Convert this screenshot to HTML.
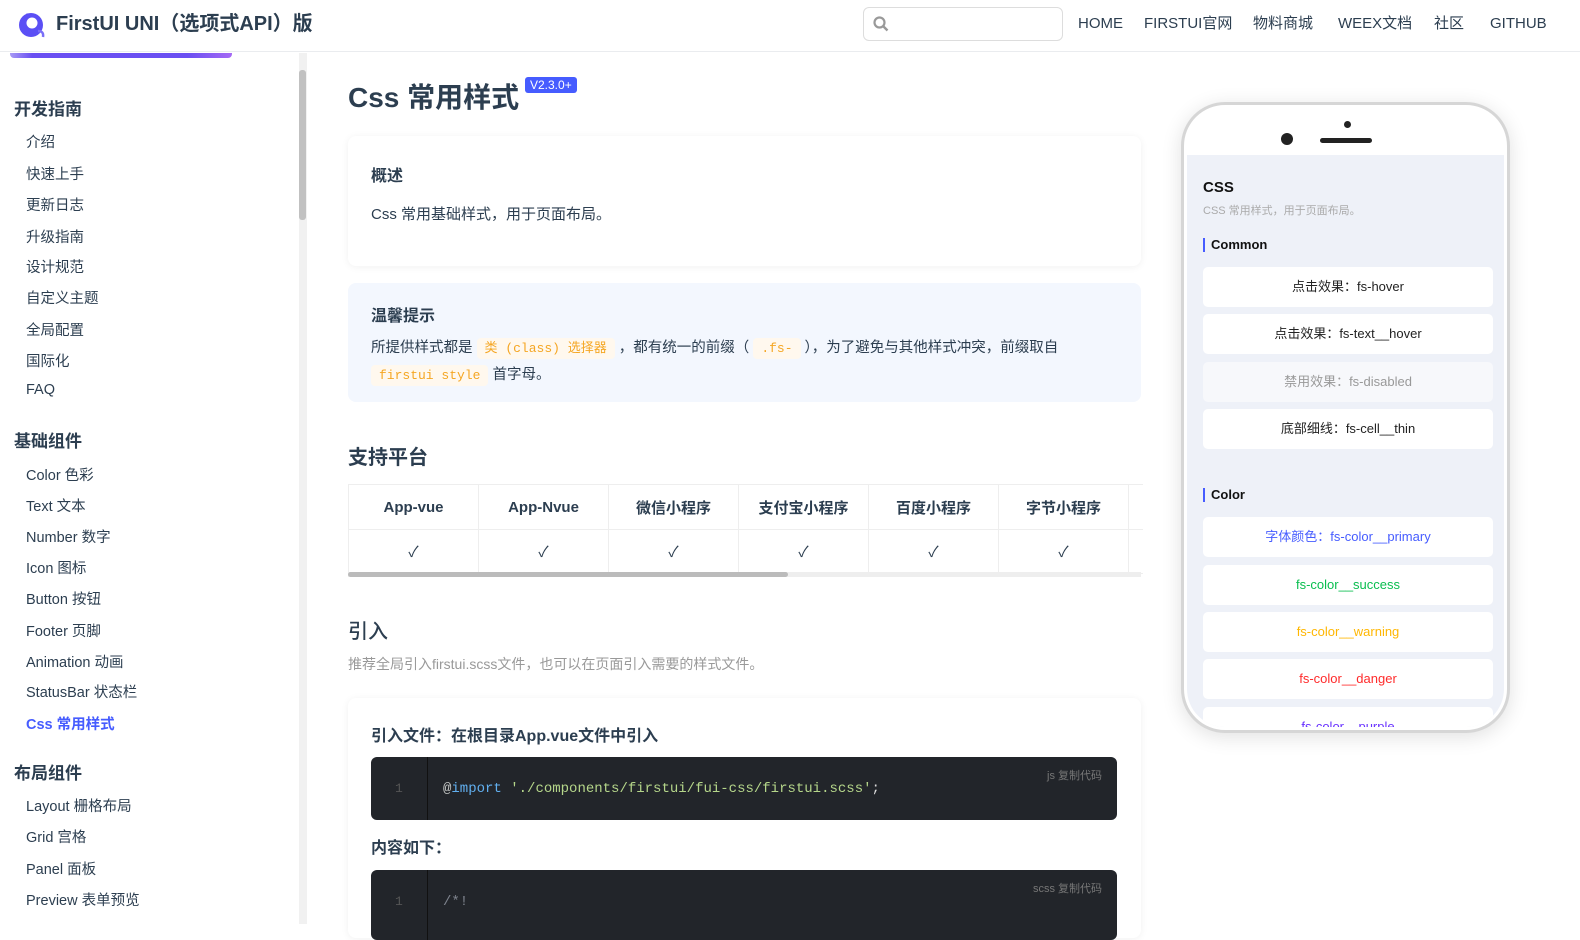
<!DOCTYPE html>
<html><head><meta charset="utf-8"><style>
*{box-sizing:border-box;margin:0;padding:0}
body{width:1580px;height:924px;overflow:hidden;background:#fff;font-family:"Liberation Sans","Noto Sans CJK SC",sans-serif;color:#2c3e50;position:relative}
.hdr{position:absolute;left:0;top:0;width:1580px;height:52px;border-bottom:1px solid #eaecef;background:#fff}
.logo{position:absolute;left:56px;top:11px;font-size:20px;font-weight:bold;color:#2c3e50;line-height:26px}
.search{position:absolute;left:863px;top:7px;width:200px;height:34px;border:1px solid #ddd;border-radius:6px}
.nav{position:absolute;top:14px;font-size:15px;color:#2c3e50;line-height:20px;height:20px;display:block}
.side{position:absolute;left:0;top:53px;width:307px;height:871px;border-right:1px solid #eaecef}
.sb{position:absolute;left:299px;top:53px;width:8px;height:871px;background:#f1f1f1}
.sbt{position:absolute;left:299px;top:70px;width:7px;height:150px;background:#c1c1c1;border-radius:3px}
.grp{position:absolute;left:14px;font-size:17px;font-weight:bold;color:#2c3e50}
.it{position:absolute;left:26px;font-size:14.5px;color:#2c3e50}
.card{position:absolute;left:348px;width:793px;border-radius:8px;background:#fff;box-shadow:0 1px 8px rgba(0,0,0,.06)}
code{font-family:"Liberation Mono","Noto Sans CJK SC",monospace;color:#f5a623;background:#fff8ee;padding:3px 8px;border-radius:4px;font-size:13px}
table{border-collapse:collapse;position:absolute;left:348px;top:484px}
td{width:130px;text-align:center;border:1px solid #eee;font-size:15px}
.code{position:absolute;left:371px;width:746px;background:#22252a;border-radius:6px}
.phone{position:absolute;left:1181px;top:102px;width:329px;height:631px;border:3px solid #d6d6d6;border-radius:44px;background:#fff;box-shadow:0 4px 20px rgba(0,0,0,.12);overflow:hidden}
.scr{position:absolute;left:3px;top:50px;right:3px;bottom:3px;background:#eef1f8;border-radius:0 0 38px 38px;overflow:hidden}
.btn{position:absolute;left:16px;width:290px;height:40px;background:#fff;border-radius:5px;text-align:center;line-height:40px;font-size:13px;color:#222}
</style></head><body>
<div class="hdr">
<svg style="position:absolute;left:17px;top:9px" width="30" height="30" viewBox="0 0 30 30"><circle cx="14" cy="16" r="12" fill="#5b4ff5"/><path d="M10 4 L13 9 L7 9Z" fill="#5b4ff5"/><circle cx="15" cy="14" r="5.5" fill="#fff"/><path d="M21 22 q6 0 5 6" stroke="#7a6ff7" stroke-width="2.5" fill="none"/></svg>
<div class="logo">FirstUI UNI（选项式API）版</div>
<div class="search"><svg style="position:absolute;left:9px;top:8px" width="16" height="16" viewBox="0 0 16 16"><circle cx="6.5" cy="6.5" r="5" stroke="#999" stroke-width="2.2" fill="none"/><path d="M10 10l4.5 4.5" stroke="#999" stroke-width="2.4"/></svg></div>
<span class="nav" style="left:1078px">HOME</span><span class="nav" style="left:1144px">FIRSTUI官网</span><span class="nav" style="left:1253px">物料商城</span><span class="nav" style="left:1338px">WEEX文档</span><span class="nav" style="left:1434px">社区</span><span class="nav" style="left:1490px">GITHUB</span>
</div>
<div class="side">
<div style="position:absolute;left:10px;top:0;width:222px;height:5px;background:linear-gradient(90deg,#a89bf5,#6a4ff2 10%,#6a4ff2 80%,#a66af5);border-radius:0 0 4px 4px"></div>
<div class="grp" style="top:42px">开发指南</div>
<div class="it" style="top:78px">介绍</div><div class="it" style="top:110px">快速上手</div><div class="it" style="top:141px">更新日志</div><div class="it" style="top:173px">升级指南</div><div class="it" style="top:203px">设计规范</div><div class="it" style="top:234px">自定义主题</div><div class="it" style="top:266px">全局配置</div><div class="it" style="top:297px">国际化</div><div class="it" style="top:329px">FAQ</div>
<div class="grp" style="top:374px">基础组件</div>
<div class="it" style="top:411px">Color 色彩</div><div class="it" style="top:442px">Text 文本</div><div class="it" style="top:473px">Number 数字</div><div class="it" style="top:504px">Icon 图标</div><div class="it" style="top:535px">Button 按钮</div><div class="it" style="top:567px">Footer 页脚</div><div class="it" style="top:598px">Animation 动画</div><div class="it" style="top:628px">StatusBar 状态栏</div><div class="it" style="top:660px;color:#465cff;font-weight:bold">Css 常用样式</div>
<div class="grp" style="top:706px">布局组件</div>
<div class="it" style="top:742px">Layout 栅格布局</div><div class="it" style="top:773px">Grid 宫格</div><div class="it" style="top:805px">Panel 面板</div><div class="it" style="top:836px">Preview 表单预览</div>
</div>
<div class="sb"></div><div class="sbt"></div>

<div style="position:absolute;left:348px;top:76px;font-size:28px;font-weight:bold;color:#2c3e50">Css 常用样式</div>
<div style="position:absolute;left:525px;top:77px;background:#465cff;color:#fff;font-size:12px;padding:1px 5px;border-radius:3px">V2.3.0+</div>

<div class="card" style="top:136px;height:130px">
<div style="position:absolute;left:23px;top:26px;font-size:16px;font-weight:bold">概述</div>
<div style="position:absolute;left:23px;top:67px;font-size:15px">Css 常用基础样式，用于页面布局。</div></div>
<div class="card" style="top:283px;height:119px;background:#f3f7fe;box-shadow:none">
<div style="position:absolute;left:23px;top:19px;font-size:16px;font-weight:bold">温馨提示</div>
<div style="position:absolute;left:23px;top:52px;width:740px;font-size:14.5px;line-height:27px">所提供样式都是 <code>类 (class) 选择器</code> ，都有统一的前缀（ <code>.fs-</code> ），为了避免与其他样式冲突，前缀取自 <code>firstui style</code> 首字母。</div></div>

<div style="position:absolute;left:348px;top:441px;font-size:20px;font-weight:bold">支持平台</div>
<table><tr style="height:45px;font-weight:bold"><td>App-vue</td><td>App-Nvue</td><td>微信小程序</td><td>支付宝小程序</td><td>百度小程序</td><td>字节小程序</td><td style="width:14px;border-right:none"></td></tr>
<tr style="height:44px"><td>✓</td><td>✓</td><td>✓</td><td>✓</td><td>✓</td><td>✓</td><td style="width:14px;border-right:none"></td></tr></table>
<div style="position:absolute;left:348px;top:572px;width:793px;height:5px;background:#eee"></div>
<div style="position:absolute;left:348px;top:572px;width:440px;height:5px;background:#bbb;border-radius:3px"></div>

<div style="position:absolute;left:348px;top:615px;font-size:20px;font-weight:500">引入</div>
<div style="position:absolute;left:348px;top:654px;font-size:14px;color:#999">推荐全局引入firstui.scss文件，也可以在页面引入需要的样式文件。</div>
<div class="card" style="top:698px;height:240px">
<div style="position:absolute;left:23px;top:24px;font-size:16px;font-weight:bold">引入文件：在根目录App.vue文件中引入</div>
<div style="position:absolute;left:23px;top:136px;font-size:16px;font-weight:bold">内容如下：</div></div>
<div class="code" style="top:757px;height:63px"><div style="position:absolute;left:56px;top:0;bottom:0;border-left:1px solid #111"></div>
<span style="position:absolute;left:24px;top:24px;color:#555;font:13px 'Liberation Mono',monospace">1</span>
<span style="position:absolute;left:72px;top:24px;font:14px 'Liberation Mono',monospace;color:#c5c8c6">@<span style="color:#61afef">import</span> <span style="color:#b5d68a">'./components/firstui/fui-css/firstui.scss'</span><span style="color:#ddd">;</span></span>
<span style="position:absolute;right:15px;top:10px;color:#777;font-size:11px">js 复制代码</span></div>
<div class="code" style="top:870px;height:70px"><div style="position:absolute;left:56px;top:0;bottom:0;border-left:1px solid #111"></div>
<span style="position:absolute;left:24px;top:24px;color:#555;font:13px 'Liberation Mono',monospace">1</span>
<span style="position:absolute;left:72px;top:24px;font:14px 'Liberation Mono',monospace;color:#7f848e">/*!</span>
<span style="position:absolute;right:15px;top:10px;color:#777;font-size:11px">scss 复制代码</span></div>

<div class="phone">
<div style="position:absolute;left:97px;top:28px;width:12px;height:12px;border-radius:50%;background:#222"></div>
<div style="position:absolute;left:160px;top:16px;width:7px;height:7px;border-radius:50%;background:#222"></div>
<div style="position:absolute;left:136px;top:33px;width:52px;height:5px;border-radius:3px;background:#222"></div>
<div class="scr">
<div style="position:absolute;left:16px;top:24px;font-size:15px;font-weight:bold;color:#111">CSS</div>
<div style="position:absolute;left:16px;top:47px;font-size:11px;color:#aaa">CSS 常用样式，用于页面布局。</div>
<div style="position:absolute;left:16px;top:83px;border-left:2px solid #465cff;padding-left:6px;height:14px;line-height:14px;font-size:13px;font-weight:bold;color:#111">Common</div>
<div class="btn" style="top:112px">点击效果：fs-hover</div>
<div class="btn" style="top:159px">点击效果：fs-text__hover</div>
<div class="btn" style="top:207px;background:#f7f8fb;color:#999">禁用效果：fs-disabled</div>
<div class="btn" style="top:254px">底部细线：fs-cell__thin</div>
<div style="position:absolute;left:16px;top:333px;border-left:2px solid #465cff;padding-left:6px;height:14px;line-height:14px;font-size:13px;font-weight:bold;color:#111">Color</div>
<div class="btn" style="top:362px;color:#465cff">字体颜色：fs-color__primary</div>
<div class="btn" style="top:410px;color:#09be4f">fs-color__success</div>
<div class="btn" style="top:457px;color:#ffb703">fs-color__warning</div>
<div class="btn" style="top:504px;color:#ff2b2b">fs-color__danger</div>
<div class="btn" style="top:552px;color:#6831ff">fs-color__purple</div>
</div></div>
</body></html>
